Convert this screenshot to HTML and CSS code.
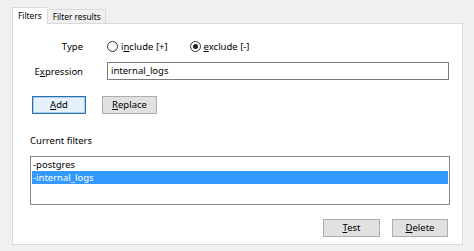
FILE: index.html
```html
<!doctype html>
<html>
<head>
	<meta charset='utf-8'>
	<title>Filters</title>
	<link rel="stylesheet" href="styles.css">
</head>
<body>

	<div class='tabs'>
		<div class='tab active'>Filters</div>
		<div class='tab'>Filter results</div>
	</div>

	<div class='panel'>
		<div class='form'>
			<span class='label'>Type</span>
			<div class='radios'>
				<label class='radio'><span class='dot'></span><span>i<u>n</u>clude [+]</span></label>
				<label class='radio checked'><span class='dot'></span><span><u>e</u>xclude [-]</span></label>
			</div>

			<span class='label'>E<u>x</u>pression</span>
			<div class='input'>internal_logs</div>
		</div>

		<div class='buttons'>
			<button class='btn default'><u>A</u>dd</button>
			<button class='btn'><u>R</u>eplace</button>
		</div>

		<div class='list-label'>Current filters</div>
		<ul class='list'>
			<li>-postgres</li>
			<li class='selected'>-internal_logs</li>
		</ul>

		<div class='buttons bottom'>
			<button class='btn'><u>T</u>est</button>
			<button class='btn'><u>D</u>elete</button>
		</div>
	</div>

</body>
</html>
```

FILE: styles.css
```css
body {
	margin: 0;
	padding: 7px 11px 0 12px;
	background: #f0f0f0;
	font-family: "Noto Sans", "Open Sans", sans-serif;
	font-size: 9.5px;
	color: #000;
}

u {
	text-decoration-thickness: 1px;
	text-underline-offset: 1px;
}

/* tab strip */
.tabs {
	display: flex;
	align-items: flex-end;
	height: 16px;
}

.tab {
	height: 14px;
	line-height: 13px;
	padding: 0 4px 0 5px;
	border: 1px solid #d9d9d9;
	border-bottom: none;
	background: #f0f0f0;
	box-sizing: border-box;
	font-size: 8.3px;
}

.tab.active {
	height: 17px;
	line-height: 15px;
	margin-bottom: -1px;
	padding: 0 5px;
	background: #fff;
	position: relative;
	z-index: 1;
	border-right: none;
}

/* white page under the tabs */
.panel {
	width: 451px;
	height: 222px;
	box-sizing: border-box;
	background: #fff;
	border: 1px solid #d9d9d9;
	padding: 13px 12px 0 17px;
}

.form {
	display: grid;
	grid-template-columns: 53px 1fr;
	column-gap: 24px;
	row-gap: 7px;
	align-items: center;
}

.label {
	justify-self: end;
	white-space: nowrap;
}

.radios {
	display: flex;
	gap: 22px;
	height: 18px;
	align-items: center;
}

.radio {
	display: flex;
	align-items: center;
	gap: 3px;
}

.dot {
	width: 11px;
	height: 11px;
	box-sizing: border-box;
	border: 1px solid #333;
	border-radius: 50%;
	display: flex;
	align-items: center;
	justify-content: center;
}

.radio.checked .dot::after {
	content: '';
	width: 5px;
	height: 5px;
	border-radius: 50%;
	background: #222;
}

.input {
	height: 18px;
	margin-right: 1px;
	box-sizing: border-box;
	border: 1px solid #7a7a7a;
	padding: 0 3px;
	line-height: 16px;
}

.buttons {
	display: flex;
	gap: 16px;
	margin: 16px 0 0 2px;
}

.btn {
	height: 18px;
	padding: 0;
	width: 55px;
	font: inherit;
	background: #e1e1e1;
	border: 1px solid #adadad;
	line-height: 14px;
}

.btn.default {
	width: 54px;
	background: #e5f1fb;
	border-color: #2f6fae;
	box-shadow: inset 0 0 0 1px #a8cdef;
}

.list-label {
	margin-top: 20px;
	line-height: 14px;
}

ul {
	list-style: none;
	padding: 0;
	margin: 0;
}

.list {
	margin-top: 8px;
	width: 420px;
	height: 49px;
	box-sizing: border-box;
	border: 1px solid #828790;
	padding: 1px 1px;
}

.list li {
	height: 13px;
	line-height: 13px;
	padding-left: 1px;
}

.list li.selected {
	background: #3399ff;
	color: #fff;
}

.buttons.bottom {
	justify-content: flex-end;
	gap: 12px;
	margin: 14px 2px 0 0;
}

.buttons.bottom .btn:first-child {
	width: 57px;
}

.buttons.bottom .btn:last-child {
	width: 56px;
}
```
